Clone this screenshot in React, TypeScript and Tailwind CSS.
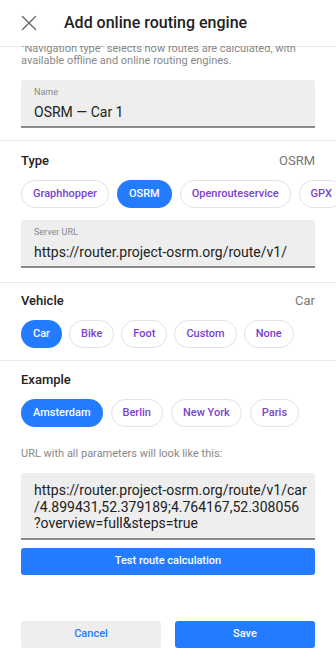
import { type FC } from "react";

const Chip: FC<{ label: string; active?: boolean }> = ({ label, active }) => (
  <div
    className={`shrink-0 h-[28px] rounded-full flex items-center text-[11px] font-medium ${
      active ? "px-3 bg-[#237bff] text-white" : "px-[11px] border border-[#e2e2e2] text-[#7b3fd0]"
    }`}
  >
    {label}
  </div>
);

const Field: FC<{ label: string; value: string }> = ({ label, value }) => (
  <div className="mx-[21px] bg-[#eeeeee] border-b-2 border-[#8a8a8a] rounded-t-[3px] px-[13px] pt-[6px] pb-[4px]">
    <div className="text-[9px] leading-[12px] text-[#888]">{label}</div>
    <div className="mt-[4px] text-[14px] leading-[20px] text-[#222] whitespace-nowrap">{value}</div>
  </div>
);

const SectionHead: FC<{ title: string; value?: string }> = ({ title, value }) => (
  <div className="mx-[21px] flex items-center justify-between h-[16px]">
    <span className="text-[13px] font-medium text-[#222]">{title}</span>
    {value && <span className="text-[13px] text-[#777]">{value}</span>}
  </div>
);

const Divider: FC = () => <div className="h-px bg-[#ececec]" />;

export default function App() {
  return (
    <div className="w-[336px] h-[664px] bg-white flex flex-col overflow-hidden" style={{ fontFamily: "Roboto, 'Noto Sans', sans-serif" }}>
      <div className="relative z-10 h-[46px] shrink-0 flex items-center bg-white shadow-[0_1px_1px_rgba(0,0,0,0.08)]">
        <svg className="ml-[21px]" width="16" height="16" viewBox="0 0 16 16" fill="none" stroke="#666" strokeWidth="1.4" strokeLinecap="round">
          <path d="M1.5 1.5 L14.5 14.5 M14.5 1.5 L1.5 14.5" />
        </svg>
        <span className="ml-[27px] text-[16px] font-medium text-[#222]">Add online routing engine</span>
      </div>

      <div className="flex-1 overflow-hidden flex flex-col">
        <p className="-mt-[3px] mx-[21px] text-[11px] leading-[12px] text-[#888]">
          "Navigation type" selects how routes are calculated, with available offline and online routing engines.
        </p>

        <div className="mt-[13px]">
          <Field label="Name" value="OSRM — Car 1" />
        </div>

        <div className="mt-[12px]"><Divider /></div>

        <div className="mt-[12px]"><SectionHead title="Type" value="OSRM" /></div>
        <div className="mt-[11px] pl-[21px] flex gap-2 overflow-hidden">
          <Chip label="Graphhopper" />
          <Chip label="OSRM" active />
          <Chip label="Openrouteservice" />
          <Chip label="GPX" />
        </div>

        <div className="mt-[12px]">
          <Field label="Server URL" value="https://router.project-osrm.org/route/v1/" />
        </div>

        <div className="mt-[14px]"><Divider /></div>

        <div className="mt-[10px]"><SectionHead title="Vehicle" value="Car" /></div>
        <div className="mt-[11px] pl-[21px] flex gap-[7px]">
          <Chip label="Car" active />
          <Chip label="Bike" />
          <Chip label="Foot" />
          <Chip label="Custom" />
          <Chip label="None" />
        </div>

        <div className="mt-[12px]"><Divider /></div>

        <div className="mt-[11px]"><SectionHead title="Example" /></div>
        <div className="mt-[11px] pl-[21px] flex gap-2">
          <Chip label="Amsterdam" active />
          <Chip label="Berlin" />
          <Chip label="New York" />
          <Chip label="Paris" />
        </div>

        <p className="mt-[20px] mx-[21px] text-[11px] leading-[14px] text-[#888]">URL with all parameters will look like this:</p>

        <div className="mt-[12px] mx-[21px] bg-[#eeeeee] border-b-2 border-[#8a8a8a] rounded-t-[3px] px-[13px] pt-[9px] pb-[6px] text-[14px] leading-[16.5px] text-[#222] whitespace-nowrap">
          <div>https://router.project-osrm.org/route/v1/car</div>
          <div>/4.899431,52.379189;4.764167,52.308056</div>
          <div>?overview=full&amp;steps=true</div>
        </div>

        <button className="mt-[8px] mx-[21px] h-[27px] rounded-[3px] bg-[#237bff] text-white text-[11px] font-medium">
          Test route calculation
        </button>
      </div>

      <div className="shrink-0 px-[21px] pb-[16px] flex gap-[14px]">
        <button className="flex-1 h-[27px] rounded-[3px] bg-[#eeeeee] text-[#237bff] text-[11px] font-medium">Cancel</button>
        <button className="flex-1 h-[27px] rounded-[3px] bg-[#237bff] text-white text-[11px] font-medium">Save</button>
      </div>
    </div>
  );
}
